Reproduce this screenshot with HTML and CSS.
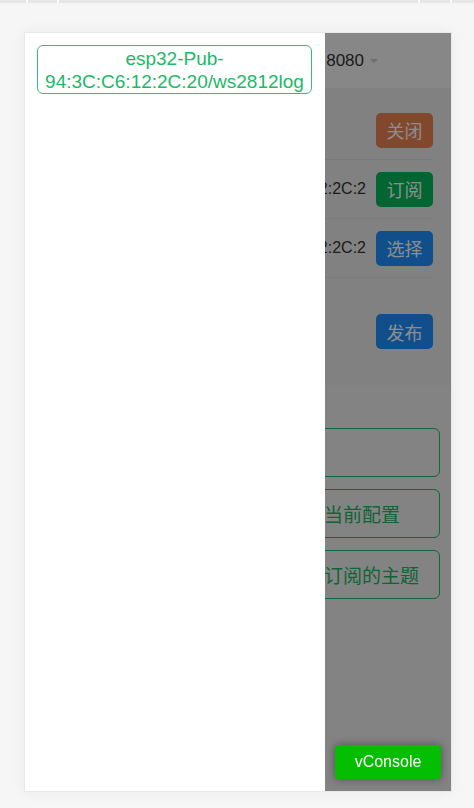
FILE: index.html
```html
<!DOCTYPE html>
<html lang="zh-CN">
<head>
<meta charset="utf-8">
<title>MQTT</title>
<link rel="stylesheet" href="styles.css">
</head>
<body>
<div class="topbar"><span class="tick t1"></span><span class="tick t2"></span><span class="tick t3"></span><span class="tick t4"></span></div>
<main class="frame">
  <div class="page">
    <header class="hdr">
      <div class="sel"><div class="sel-text"><span>:8080</span></div><i class="caret"></i></div>
    </header>
    <section class="rows">
      <div class="row"><div class="val"></div><button class="btn orange">关闭</button></div>
      <div class="row"><div class="val"><span>2:2C:2</span></div><button class="btn green">订阅</button></div>
      <div class="row"><div class="val"><span>2:2C:2</span></div><button class="btn blue">选择</button></div>
      <div class="row tall"><div class="val"></div><button class="btn blue">发布</button></div>
    </section>
    <section class="actions">
      <div class="box">设备配置</div>
      <div class="box">点击按钮查看并修改本设备的当前配置</div>
      <div class="box">点击按钮查看并修改本设备已经订阅的主题</div>
    </section>
  </div>
  <div class="mask"></div>
  <aside class="drawer">
    <div class="tag">esp32-Pub-94:3C:C6:12:2C:20/ws2812log</div>
  </aside>
</main>
<button class="vconsole">vConsole</button>
</body>
</html>
```
FILE: styles.css
```css
html, body {
  margin: 0;
  padding: 0;
}
body {
  background: #f6f6f6;
  font-family: "Liberation Sans", "Noto Sans CJK SC", sans-serif;
  height: 808px;
  overflow: hidden;
}
.topbar {
  display: flex;
  height: 3px;
  background: #e6e6e6;
}
.tick {
  width: 2px;
  background: #fafafa;
}
.t1 { margin-left: 26px; }
.t2 { margin-left: 29px; }
.t3 { margin-left: 359px; }
.t4 { margin-left: 30px; }

.frame {
  position: relative;
  box-sizing: border-box;
  margin: 29px 0 0 24px;
  width: 428px;
  height: 760px;
  border: 1px solid #e9e9e9;
  background: #fff;
  box-shadow: 0 0 14px rgba(0, 0, 0, 0.05);
  overflow: hidden;
}
.page {
  display: flex;
  flex-direction: column;
  height: 100%;
}
.hdr {
  height: 55px;
  flex: none;
  display: flex;
  align-items: center;
  padding-left: 15px;
  background: #f6f6f6;
  font-size: 17px;
  color: #333;
}
.sel {
  display: flex;
  align-items: center;
}
.sel-text {
  width: 324px;
  display: flex;
  justify-content: flex-end;
  overflow: hidden;
  white-space: nowrap;
}
.caret {
  margin-left: 6px;
  width: 0;
  height: 0;
  border-left: 4px solid transparent;
  border-right: 4px solid transparent;
  border-top: 4px solid #c8c8c8;
}
.rows {
  flex: none;
  padding-top: 13px;
  background: #ebebeb;
}
.row {
  box-sizing: border-box;
  height: 59px;
  margin: 0 18px 0 15px;
  display: flex;
  align-items: center;
  border-bottom: 1px solid #dedede;
}
.row.tall {
  height: 107px;
  border-bottom: none;
}
.val {
  flex: 1;
  min-width: 0;
  margin-right: 10px;
  display: flex;
  justify-content: flex-end;
  overflow: hidden;
  white-space: nowrap;
  font-size: 16px;
  color: #333;
}
.btn {
  flex: none;
  width: 57px;
  height: 35px;
  border: none;
  border-radius: 5px;
  padding: 0;
  color: #fff;
  font-family: "Noto Sans CJK SC", sans-serif;
  font-size: 18px;
}
.orange { background: #ec8452; }
.green { background: #07b85a; }
.blue { background: #1e90ff; }

.actions {
  flex: 1;
  background: #eeeeee;
  padding: 43px 11px 0 12px;
  display: flex;
  flex-direction: column;
  gap: 12px;
}
.box {
  box-sizing: border-box;
  height: 49px;
  border: 1px solid #19be6b;
  border-radius: 6px;
  display: flex;
  align-items: center;
  justify-content: center;
  white-space: nowrap;
  overflow: hidden;
  font-family: "Noto Sans CJK SC", sans-serif;
  font-size: 19px;
  color: #19b866;
}

.mask {
  position: absolute;
  inset: 0;
  background: rgba(0, 0, 0, 0.45);
}
.drawer {
  position: absolute;
  top: 0;
  left: 0;
  bottom: 0;
  width: 300px;
  box-sizing: border-box;
  padding: 12px 13px 0 12px;
  background: #fff;
}
.tag {
  box-sizing: border-box;
  border: 1px solid #2cc27a;
  border-radius: 6px;
  padding: 1px 3px 0;
  text-align: center;
  font-size: 19px;
  line-height: 23px;
  color: #1db868;
}

.vconsole {
  position: fixed;
  right: 33px;
  bottom: 29px;
  width: 106px;
  height: 34px;
  border: none;
  border-radius: 4px;
  background: #04be02;
  color: #fff;
  font-family: "Liberation Sans", sans-serif;
  font-size: 16px;
  box-shadow: 0 0 8px rgba(0, 0, 0, 0.4);
}
```
